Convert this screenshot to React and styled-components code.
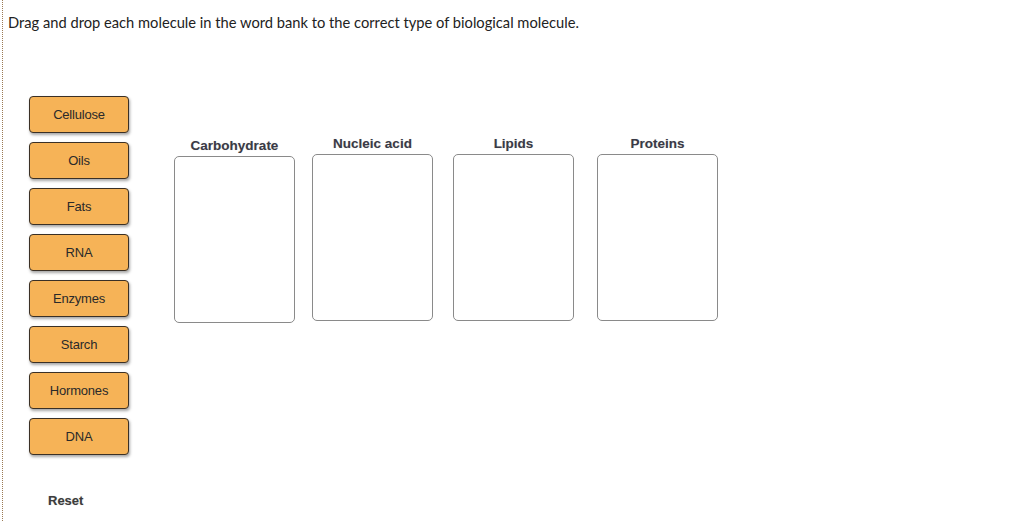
import styled, { createGlobalStyle } from "styled-components";

const GlobalStyle = createGlobalStyle`
  body {
    margin: 0;
    background: #fff;
  }
`;

const Page = styled.div`
  height: 521px;
  margin-left: 2px;
  border-left: 1px dotted #9b7a55;
  padding-left: 5px;
  box-sizing: border-box;
  overflow: hidden;
`;

const Prompt = styled.p`
  margin: 0;
  padding-top: 13px;
  font-family: Lato, "Liberation Sans", sans-serif;
  font-size: 14.7px;
  color: #222;
`;

const Board = styled.div`
  display: flex;
  align-items: flex-start;
  margin-top: 65px;
  padding-left: 21px;
`;

const Bank = styled.div`
  display: flex;
  flex-direction: column;
  gap: 9px;
  width: 100px;
`;

const Chip = styled.div`
  height: 37px;
  box-sizing: border-box;
  display: flex;
  align-items: center;
  justify-content: center;
  background: #f6b357;
  border: 1px solid #3a3026;
  border-radius: 4px;
  box-shadow: 1px 2px 3px rgba(0, 0, 0, 0.35);
  font-family: "Liberation Sans", Arial, sans-serif;
  font-size: 13px;
  letter-spacing: -0.2px;
  color: #2a2a2a;
`;

const Reset = styled.div`
  margin-top: 29px;
  padding-left: 19px;
  font-family: "Liberation Sans", Arial, sans-serif;
  font-weight: bold;
  font-size: 13px;
  color: #3c3c3c;
  text-shadow: 0 0 1px rgba(0, 0, 0, 0.25);
`;

const Zone = styled.div`
  display: flex;
  flex-direction: column;
  align-items: center;
  width: 121px;
  margin-left: ${(p) => p.$gap}px;
  margin-top: ${(p) => p.$drop}px;
`;

const ZoneTitle = styled.div`
  font-family: "Liberation Sans", Arial, sans-serif;
  font-weight: bold;
  font-size: 13.5px;
  color: #3a3a46;
  text-shadow: 0 0 1px rgba(0, 0, 0, 0.2);
  height: 18px;
`;

const DropBox = styled.div`
  width: 121px;
  height: 167px;
  box-sizing: border-box;
  border: 1px solid #8a8a8a;
  border-radius: 5px;
  background: #fff;
`;

const molecules = [
  "Cellulose",
  "Oils",
  "Fats",
  "RNA",
  "Enzymes",
  "Starch",
  "Hormones",
  "DNA",
];

const zones = [
  { name: "Carbohydrate", gap: 45, drop: 42 },
  { name: "Nucleic acid", gap: 17, drop: 40 },
  { name: "Lipids", gap: 20, drop: 40 },
  { name: "Proteins", gap: 23, drop: 40 },
];

const App = () => {
  return (
    <Page>
      <GlobalStyle />
      <Prompt>
        Drag and drop each molecule in the word bank to the correct type of
        biological molecule.
      </Prompt>
      <Board>
        <Bank>
          {molecules.map((m) => (
            <Chip key={m}>{m}</Chip>
          ))}
          <Reset>Reset</Reset>
        </Bank>
        {zones.map((z) => (
          <Zone key={z.name} $gap={z.gap} $drop={z.drop}>
            <ZoneTitle>{z.name}</ZoneTitle>
            <DropBox />
          </Zone>
        ))}
      </Board>
    </Page>
  );
};

export default App;
